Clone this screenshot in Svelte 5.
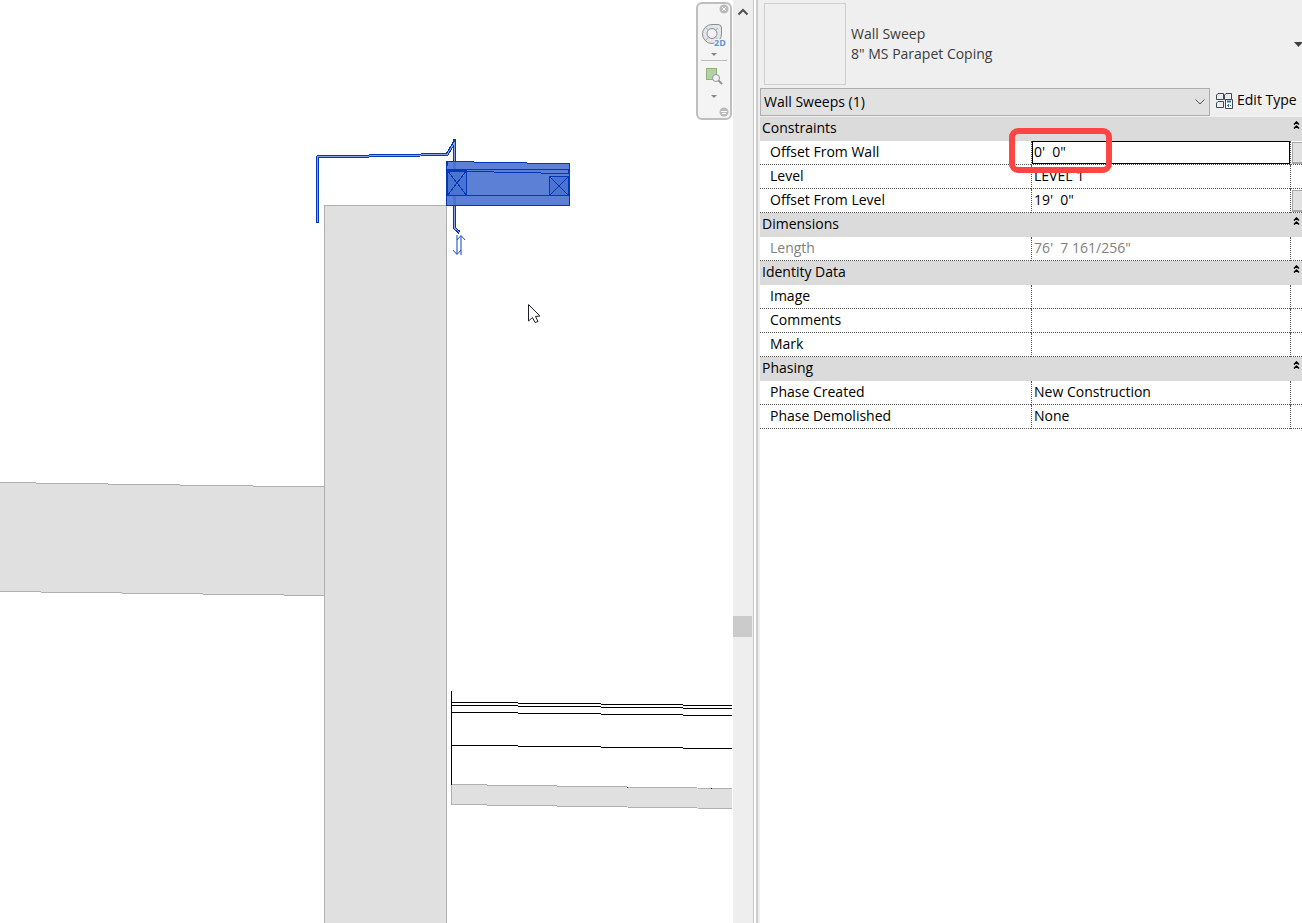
<script>
  let category = $state('Wall Sweeps (1)');
  let collapsed = $state({});

  let groups = $state([
    {
      name: 'Constraints',
      rows: [
        { label: 'Offset From Wall', value: `0'  0"`, editing: true, button: true },
        { label: 'Level', value: 'LEVEL 1' },
        { label: 'Offset From Level', value: `19'  0"`, button: true }
      ]
    },
    {
      name: 'Dimensions',
      rows: [{ label: 'Length', value: `76'  7 161/256"`, readonly: true }]
    },
    {
      name: 'Identity Data',
      rows: [
        { label: 'Image', value: '' },
        { label: 'Comments', value: '' },
        { label: 'Mark', value: '' }
      ]
    },
    {
      name: 'Phasing',
      rows: [
        { label: 'Phase Created', value: 'New Construction' },
        { label: 'Phase Demolished', value: 'None' }
      ]
    }
  ]);

  function toggle(name) {
    collapsed[name] = !collapsed[name];
  }
</script>

<div class="window">
  <main class="view">
    <svg class="drawing" viewBox="0 0 733 923" preserveAspectRatio="xMinYMin slice" shape-rendering="crispEdges" aria-label="Section view">
      <!-- roof slab, wall and lower slab -->
      <g class="solid">
        <path d="M-1 482.5L324.5 487V595.5L-1 591.5Z" />
        <path d="M324.5 924V205.5H446.5V924" />
        <path d="M732 788.5L451.5 784.5V804.5L732 808.5" />
      </g>
      <g class="thin">
        <path d="M451.5 691V785" />
        <path d="M452 702.2L732 705.6M452 705.2L732 708.6M452 712.2L732 715.6M452 745.2L732 748.6" />
        <path d="M627 787.5H628M711 788.5H712" />
      </g>

      <!-- selected coping and blocking -->
      <path class="edge" d="M317.5 223V157L447 154.5L454.5 142M454.5 139V228L459.5 232.5" />
      <path class="core" d="M317.5 222V157L447 154.5L454.5 142.5V228L459 232" />
      <path class="block" d="M446.5 161.5L569.5 163.8V205.5H446.5Z" />
      <path class="shade" d="M447 170H466V195H447ZM550 177H569V195H550ZM453 162H456V205H453Z" />
      <g class="blue">
        <path d="M446.5 169.5H569M447 171L568.5 173.6V169.5M446.5 195.5H569.5M447.5 162V166" />
        <path d="M447.5 170.5H466.5V195.5H447.5ZM447.5 170.5L466.5 195.5M466.5 170.5L447.5 195.5" />
        <path d="M549.5 176.5H568.5V195.5H549.5ZM549.5 176.5L568.5 195.5M568.5 176.5L549.5 195.5" />
      </g>

      <!-- flip control -->
      <g shape-rendering="auto">
        <path class="flip" d="M457 235V254M461 236V255" />
        <path class="flip-head" d="M453 250L457 254.5L461 250M457 240L461 235.5L465 240" />
        <path class="cursor" d="M528.5 304.5V321L532.5 317.5L535 322.5L538 321.5L535.5 316.5L540 316Z" />
      </g>
    </svg>

    <nav class="navbar" aria-label="Navigation">
      <button class="round" aria-label="Close">
        <svg width="10" height="10" viewBox="0 0 10 10"><circle cx="5" cy="5" r="4.5" fill="#bababa" /><path d="M3 3L7 7M7 3L3 7" stroke="#fff" /></svg>
      </button>
      <button class="tool wheel" aria-label="2D steering wheel">
        <svg width="24" height="26" viewBox="0 0 24 26">
          <path d="M10 1.5H16Q19.5 1.5 19.5 5V11A9.5 9.5 0 1 1 10 1.5Z" fill="#e4e6ea" stroke="#8b8d92" />
          <circle cx="10" cy="10.5" r="5" fill="#f2f2f4" stroke="#8b8d92" />
          <path d="M4 5L7 7.5M13 7.5L16 5M6.5 14L4 17M13.5 14L16 17" stroke="#aaacb0" />
          <text x="12" y="23" font-size="9" font-weight="700" stroke="#f4f4f4" stroke-width="2" paint-order="stroke" fill="#6694c8">2D</text>
        </svg>
      </button>
      <button class="drop" aria-label="Wheel options"><svg width="6" height="3" viewBox="0 0 6 3"><path d="M0 0H6L3 3Z" fill="#888" /></svg></button>
      <hr />
      <button class="tool zoom" aria-label="Zoom region">
        <svg width="18" height="18" viewBox="0 0 18 18">
          <rect x="1.5" y="1.5" width="10" height="11" fill="#b5d0a3" stroke="#8fb37c" />
          <circle cx="11" cy="11" r="3.5" fill="#eef2f6" stroke="#92969c" />
          <path d="M13.5 13.5L17 17" stroke="#92969c" stroke-width="2" />
        </svg>
      </button>
      <button class="drop" aria-label="Zoom options"><svg width="6" height="3" viewBox="0 0 6 3"><path d="M0 0H6L3 3Z" fill="#888" /></svg></button>
      <button class="round last" aria-label="Customize">
        <svg width="10" height="10" viewBox="0 0 10 10"><circle cx="5" cy="5" r="4.5" fill="#bababa" /><path d="M2 4.5H8M3 6.5H7" stroke="#fff" /></svg>
      </button>
    </nav>
  </main>

  <div class="scrollbar">
    <button class="scroll-up" aria-label="Scroll up">
      <svg width="12" height="8" viewBox="0 0 12 8"><path d="M1.5 6.5L6 2L10.5 6.5" fill="none" stroke="#505050" stroke-width="2" /></svg>
    </button>
    <div class="before"></div>
    <div class="thumb"></div>
    <div class="after"></div>
  </div>

  <aside class="properties">
    <header class="type">
      <div class="preview"></div>
      <div class="names">
        <div>Wall Sweep</div>
        <div>8" MS Parapet Coping</div>
      </div>
      <button class="type-drop" aria-label="Change type">
        <svg width="8" height="5" viewBox="0 0 8 5"><path d="M0 0H9L4.5 5Z" fill="#404040" /></svg>
      </button>
    </header>

    <div class="filter">
      <div class="select-box">
        <select aria-label="Category" bind:value={category}>
          <option>Wall Sweeps (1)</option>
        </select>
        <svg width="10" height="6" viewBox="0 0 10 6"><path d="M.5 .5L5 5L9.5 .5" fill="none" stroke="#555" /></svg>
      </div>
      <button class="edit-type">
        <svg width="17" height="17" viewBox="0 0 17 17" fill="#e8edf2" stroke="#41464f">
          <path d="M2 1.5H7.500V7.500H.5V3ZM10 1.500H15.500V7.500H8.500V3Z" />
          <path d="M2 9.500H7.500V15.500H.5V11Z" />
          <path d="M9.500 7.500H16.500V16.500H9.500Z" fill="#fff" />
          <path d="M11 9.500H15" stroke="#2f6db5" stroke-width="2" />
          <path d="M11 13.500H12M14 13.500H15M12.500 12V15" stroke="#2f6db5" />
        </svg>
        <span>Edit Type</span>
      </button>
    </div>

    <table>
      <colgroup>
        <col class="col-label" />
        <col />
        <col class="col-button" />
      </colgroup>
      {#each groups as group, g}
        <tbody>
          <tr class="group">
            <th colspan="2" scope="colgroup">{group.name}</th>
            <td>
              <button class="collapse" aria-label="Collapse {group.name}" onclick={() => toggle(group.name)}>
                <svg width="7" height="8" viewBox="0 0 7 8"><path d="M1 3.5L3.5 1L6 3.5M1 7.5L3.5 5L6 7.5" fill="none" stroke="#000" stroke-width="1.5" /></svg>
              </button>
            </td>
          </tr>
          {#if !collapsed[group.name]}
            {#each group.rows as row, r}
              <tr class:readonly={row.readonly}>
                <th scope="row"><label for="field-{g}-{r}">{row.label}</label></th>
                <td class="value">
                  <input id="field-{g}-{r}" class:editing={row.editing} readonly={row.readonly} bind:value={row.value} />
                  {#if row.editing}
                    <div class="highlight"></div>
                  {/if}
                </td>
                <td class="extra">
                  {#if row.button}
                    <button class="associate" aria-label="Associate {row.label}"></button>
                  {/if}
                </td>
              </tr>
            {/each}
          {/if}
        </tbody>
      {/each}
    </table>
  </aside>
</div>

<style>
  :global(body) {
    margin: 0;
    background: #fff;
  }

  .window {
    display: flex;
    height: 100vh;
    overflow: hidden;
    font-family: "Open Sans", "Noto Sans", sans-serif;
    font-size: 14px;
    line-height: 20px;
    color: #000;
  }

  button {
    display: block;
    margin: 0;
    padding: 0;
    border: 0;
    background: none;
    font: inherit;
    color: inherit;
  }

  svg {
    display: block;
  }

  .view {
    position: relative;
    flex: 733 0 0;
    min-width: 0;
    overflow: hidden;
  }

  .drawing {
    width: 100%;
    height: 100%;
  }

  .solid path {
    fill: #e0e0e0;
    stroke: #b0b0b0;
  }

  .thin path {
    fill: none;
    stroke: #000;
  }

  .edge {
    fill: none;
    stroke: #0038b8;
    stroke-width: 3;
  }

  .core {
    fill: none;
    stroke: #8ba7e3;
  }

  .block {
    fill: #5c80d5;
    stroke: #0038b8;
  }

  .shade {
    fill: #4a74d0;
  }

  .blue path {
    fill: none;
    stroke: #0038b8;
  }

  .flip {
    fill: none;
    stroke: #839fdf;
    stroke-width: 2;
  }

  .flip-head {
    fill: none;
    stroke: #1f50c0;
  }

  .cursor {
    fill: #fff;
    stroke: #20202c;
  }

  .navbar {
    position: absolute;
    top: 2px;
    right: 1px;
    display: flex;
    flex-direction: column;
    align-items: center;
    box-sizing: border-box;
    width: 36px;
    height: 118px;
    border: 2px solid #bebebe;
    border-radius: 6px;
    background: #f4f4f4;
  }

  .round {
    align-self: flex-end;
    margin-right: 1px;
  }

  .last {
    margin-top: auto;
    margin-bottom: 1px;
  }

  .tool {
    margin-top: 9px;
  }

  .drop {
    margin-top: 4px;
  }

  .zoom {
    margin-top: 6px;
  }

  .zoom + .drop {
    margin-top: 10px;
  }

  hr {
    width: 26px;
    height: 1px;
    margin: 4px 0 0;
    border: 0;
    background: #bebebe;
  }

  .scrollbar {
    display: flex;
    flex: none;
    flex-direction: column;
    box-sizing: border-box;
    width: 21px;
    border-right: 1px solid #c4c4c4;
    background: #eee;
  }

  .scroll-up {
    display: flex;
    justify-content: center;
    width: 19px;
    padding: 8px 0;
  }

  .before {
    flex: 592;
  }

  .thumb {
    width: 19px;
    height: 21px;
    background: #cbcbcb;
  }

  .after {
    flex: 286;
  }

  .properties {
    flex: 542 0 0;
    min-width: 0;
    margin-left: 2px;
    overflow: hidden;
    border-left: 2px solid #cbcbcb;
    padding-left: 2px;
    background: linear-gradient(to right, #eee 2px, #fff 2px);
  }

  .type {
    display: flex;
    align-items: center;
    height: 88px;
    background: #efefef;
    color: #3c3c3c;
  }

  .preview {
    box-sizing: border-box;
    width: 82px;
    height: 82px;
    margin-left: 4px;
    border: 1px solid #cdcdcd;
  }

  .names {
    flex: 1;
    padding-left: 5px;
  }

  .filter {
    display: flex;
    height: 29px;
    background: #efefef;
  }

  .select-box {
    display: flex;
    flex: 1;
    align-items: center;
    box-sizing: border-box;
    height: 28px;
    border: 1px solid #adadad;
    background: #e1e1e1;
  }

  .select-box svg {
    flex: none;
    margin: 0 4px;
  }

  select {
    flex: 1;
    min-width: 0;
    padding: 0 3px;
    border: 0;
    appearance: none;
    background: none;
    font: inherit;
    color: inherit;
  }

  .edit-type {
    display: flex;
    align-items: center;
    gap: 4px;
    width: 92px;
    height: 24px;
    padding-left: 6px;
    white-space: nowrap;
  }

  .edit-type svg {
    flex: none;
  }

  table {
    width: 100%;
    table-layout: fixed;
    border-spacing: 0;
  }

  .col-label {
    width: 50%;
  }

  .col-button {
    width: 12px;
  }

  tr {
    height: 24px;
  }

  th,
  td {
    box-sizing: border-box;
    height: 24px;
    padding: 0;
    border-bottom: 1px dotted #555;
    font-weight: 400;
    text-align: left;
    white-space: nowrap;
  }

  th[scope='row'] {
    padding: 0 0 2px 10px;
  }

  .group th,
  .group td {
    border: 0;
    background: #dbdbdb;
  }

  .group th {
    padding: 0 0 2px 2px;
  }

  .collapse {
    margin: 0 0 8px 3px;
  }

  .value {
    position: relative;
    border-left: 1px dotted #555;
  }

  .extra {
    overflow: hidden;
    border-left: 1px dotted #555;
  }

  label {
    display: block;
  }

  input {
    display: block;
    box-sizing: border-box;
    width: 100%;
    height: 23px;
    padding: 0 2px 3px;
    border: 0;
    outline: 0;
    background: none;
    font: inherit;
    color: inherit;
    white-space: pre;
  }

  input.editing {
    padding: 0 1px 3px;
    border: 1px solid #000;
  }

  .readonly {
    color: #808080;
  }

  .highlight {
    position: absolute;
    z-index: 1;
    top: -13px;
    left: -23px;
    box-sizing: border-box;
    width: 103px;
    height: 45px;
    border: 6px solid #ff4444;
    border-radius: 9px;
    pointer-events: none;
  }

  .associate {
    box-sizing: border-box;
    width: 24px;
    height: 22px;
    margin-left: 1px;
    border: 1px solid #a8a8a8;
    border-bottom-width: 2px;
    background: #e1e1e1;
  }
</style>
